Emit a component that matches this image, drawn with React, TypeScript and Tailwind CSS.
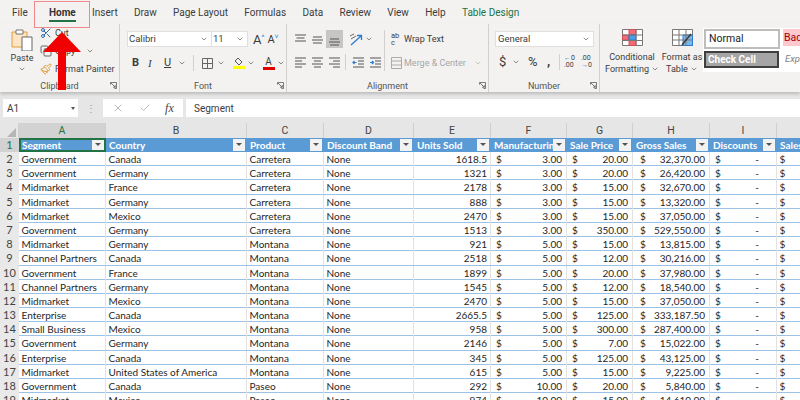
import { ChevronDown, Scissors, Copy, Paintbrush, X, Check } from "lucide-react";

const tabs = ["File", "Home", "Insert", "Draw", "Page Layout", "Formulas", "Data", "Review", "View", "Help"];

const rows = [
  ["Government", "Canada", "Carretera", "1618.5", "3.00", "20.00", "32,370.00"],
  ["Government", "Germany", "Carretera", "1321", "3.00", "20.00", "26,420.00"],
  ["Midmarket", "France", "Carretera", "2178", "3.00", "15.00", "32,670.00"],
  ["Midmarket", "Germany", "Carretera", "888", "3.00", "15.00", "13,320.00"],
  ["Midmarket", "Mexico", "Carretera", "2470", "3.00", "15.00", "37,050.00"],
  ["Government", "Germany", "Carretera", "1513", "3.00", "350.00", "529,550.00"],
  ["Midmarket", "Germany", "Montana", "921", "5.00", "15.00", "13,815.00"],
  ["Channel Partners", "Canada", "Montana", "2518", "5.00", "12.00", "30,216.00"],
  ["Government", "France", "Montana", "1899", "5.00", "20.00", "37,980.00"],
  ["Channel Partners", "Germany", "Montana", "1545", "5.00", "12.00", "18,540.00"],
  ["Midmarket", "Mexico", "Montana", "2470", "5.00", "15.00", "37,050.00"],
  ["Enterprise", "Canada", "Montana", "2665.5", "5.00", "125.00", "333,187.50"],
  ["Small Business", "Mexico", "Montana", "958", "5.00", "300.00", "287,400.00"],
  ["Government", "Germany", "Montana", "2146", "5.00", "7.00", "15,022.00"],
  ["Enterprise", "Canada", "Montana", "345", "5.00", "125.00", "43,125.00"],
  ["Midmarket", "United States of America", "Montana", "615", "5.00", "15.00", "9,225.00"],
  ["Government", "Canada", "Paseo", "292", "10.00", "20.00", "5,840.00"],
  ["Midmarket", "Mexico", "Paseo", "974", "10.00", "15.00", "14,610.00"],
];

const grid = "grid grid-cols-[19px_87px_141px_77px_90px_77px_76px_66px_77px_67px_60px]";

const Caret = ({ className = "" }: { className?: string }) => (
  <ChevronDown size={8} strokeWidth={2} className={`shrink-0 text-[#555] ${className}`} />
);

const Launcher = () => (
  <svg width="7" height="7" viewBox="0 0 8 8" className="absolute right-[2px] bottom-[3px] text-[#666]" fill="none" stroke="currentColor">
    <path d="M0.5 3V0.5H7.5V7.5H5" />
    <path d="M1 1l5 5M6 3.5V6H3.5" />
  </svg>
);

const Group = ({ label, w, children }: { label: string; w: string; children: React.ReactNode }) => (
  <div className={`relative flex h-[68px] shrink-0 flex-col border-r border-[#d2d0ce] ${w}`}>
    <div className="min-h-0 flex-1">{children}</div>
    <div className="text-center text-[9px] leading-[12px] text-[#555]">{label}</div>
    <Launcher />
  </div>
);

// four short lines, used for the alignment buttons
const Lines = ({ d, accent }: { d: string; accent?: string }) => (
  <svg width="13" height="13" viewBox="0 0 13 13" fill="none" stroke="#555" strokeWidth="1">
    <path d={d} />
    {accent && <path d={accent} stroke="#2b7cd3" strokeWidth="1.2" />}
  </svg>
);

const Filter = () => (
  <span className="absolute right-[2px] top-[1px] flex h-[12px] w-[12px] items-center justify-center bg-[#f2f2f2]">
    <span className="h-0 w-0 border-x-[3px] border-t-[3px] border-x-transparent border-t-[#555]" />
  </span>
);

const HeaderCell = ({ label, selected }: { label: string; selected?: boolean }) => (
  <div className="relative whitespace-nowrap pl-[3px] pr-[14px] font-bold text-white">
    <span className="block overflow-hidden">{label}</span>
    <Filter />
    {selected && <span className="absolute inset-0 border-2 border-[#217346]" />}
  </div>
);

const Money = ({ value, left = "pl-[5px]", right = "pr-[4px]" }: { value: string; left?: string; right?: string }) => (
  <div className={`flex justify-between border-r border-[#e2e2e2] ${left} ${right}`}>
    <span>$</span>
    <span>{value}</span>
  </div>
);

const Cell = ({ children, right }: { children: React.ReactNode; right?: boolean }) => (
  <div className={`overflow-hidden whitespace-nowrap border-r border-[#e2e2e2] ${right ? "pr-[3px] text-right" : "pl-[2.5px]"}`}>{children}</div>
);

export default function App() {
  return (
    <div className="relative h-[400px] w-[800px] overflow-hidden bg-[#e6e6e6] font-['Roboto',sans-serif] text-[#3c3c3c]">
      {/* tabs */}
      <nav className="flex h-[24px] items-center gap-[16.3px] bg-[#f3f2f1] pl-[12px] text-[10px]">
        {tabs.map((t) => (
          <span key={t} className={`relative ${t === "Home" ? "ml-[5px] font-bold text-[#333]" : ""}`}>
            {t}
            {t === "Home" && <span className="absolute -bottom-[2px] left-0 right-0 h-[2px] bg-[#217346]" />}
          </span>
        ))}
        <span className="text-[#217346]">Table Design</span>
      </nav>

      {/* ribbon */}
      <div className="flex h-[68px] whitespace-nowrap bg-[#f3f2f1] shadow-[0_2px_3px_rgba(0,0,0,0.18)]">
        <Group label="Clipboard" w="w-[120px]">
          <div className="flex pl-[10px] pt-[3px]">
            <div className="flex w-[24px] flex-col items-center">
              <svg width="24" height="24" viewBox="0 0 24 24" fill="none">
                <path d="M2 5h15v15H2z" fill="#fbe5c4" stroke="#e39c36" />
                <path d="M6 3h7v4H6z" fill="#fff" stroke="#777" />
                <path d="M12 10h10v14H12z" fill="#fff" stroke="#666" />
              </svg>
              <span className="text-[9px] leading-[14px]">Paste</span>
              <Caret />
            </div>
            <div className="ml-[6px] -mt-[1px] flex flex-col gap-[4px] text-[9px] leading-[14px]">
              <div className="flex items-center gap-[3px]">
                <Scissors size={12} className="text-[#2b6cb0]" />
                <span>Cut</span>
              </div>
              <div className="flex items-center gap-[3px]">
                <Copy size={12} className="text-[#666]" />
                <span>Copy</span>
                <Caret className="ml-[8px]" />
              </div>
              <div className="flex items-center gap-[3px]">
                <Paintbrush size={12} className="text-[#e39c36]" />
                <span>Format Painter</span>
              </div>
            </div>
          </div>
        </Group>

        <Group label="Font" w="w-[167px]">
          <div className="flex items-center pl-[7px] pt-[7px]">
            <div className="flex h-[16px] w-[85px] items-center justify-between border border-[#e1dfdd] bg-white px-[1px] pr-[3px] text-[9.5px]">
              Calibri
              <Caret />
            </div>
            <div className="flex h-[16px] w-[36px] items-center justify-between border border-l-0 border-[#e1dfdd] bg-white px-[1px] pr-[3px] text-[9.5px]">
              11
              <Caret />
            </div>
            <span className="ml-[5px] text-[13px] leading-none">A<sup className="text-[7px] text-[#2b7cd3]">^</sup></span>
            <span className="ml-[3px] text-[11px] leading-none">A<sup className="text-[7px] text-[#2b7cd3]">˅</sup></span>
          </div>
          <div className="flex items-center pl-[12px] pt-[8px] text-[11px] leading-[14px]">
            <b className="w-[16px]">B</b>
            <i className="w-[16px] font-['Liberation_Serif',serif]">I</i>
            <u className="w-[14px]">U</u>
            <Caret />
            <span className="mx-[7px] h-[16px] w-px bg-[#d2d0ce]" />
            <svg width="13" height="13" viewBox="0 0 13 13" fill="none" stroke="#666"><path d="M1.5 1.5h10v10h-10zM6.5 1.5v10M1.5 6.5h10" /></svg>
            <Caret className="ml-[3px]" />
            <span className="ml-[7px] flex w-[13px] flex-col items-center">
              <svg width="11" height="9" viewBox="0 0 11 9" fill="none" stroke="#555"><path d="M2 4l3-3 4 4-3 3z" /></svg>
              <span className="h-[3px] w-[12px] bg-[#ffff00]" />
            </span>
            <Caret className="ml-[2px]" />
            <span className="ml-[7px] flex w-[13px] flex-col items-center text-[10px] leading-[10px]">
              A
              <span className="h-[3px] w-[12px] bg-[#e00000]" />
            </span>
            <Caret className="ml-[2px]" />
          </div>
        </Group>

        <Group label="Alignment" w="w-[202px]">
          <div className="flex pl-[5px] pt-[6px]">
            <div className="flex w-[92px] flex-col">
              <div className="flex items-center">
                <span className="flex h-[18px] w-[17px] items-center justify-center"><Lines d="M1 2h11M2.5 5h8M1 8h11" /></span>
                <span className="flex h-[18px] w-[17px] items-center justify-center"><Lines d="M2 4h9M1 7h11M2 10h9" /></span>
                <span className="flex h-[18px] w-[17px] items-center justify-center bg-[#c8c6c4]"><Lines d="M2 6h9M1 9h11M2 12h9" /></span>
                <span className="ml-[6px] flex items-center">
                  <svg width="14" height="13" viewBox="0 0 14 13" fill="none" stroke="#2b7cd3" strokeWidth="1.3"><path d="M2 12L12 3M8 2.5h4.5V7" /><path d="M1 3l4-2M2 6l5-3" stroke="#666" strokeWidth="1" /></svg>
                  <Caret className="ml-[2px]" />
                </span>
              </div>
              <div className="mt-[6px] flex items-center">
                <span className="flex w-[17px] justify-center"><Lines d="M1 2h11M1 5h7M1 8h11M1 11h7" /></span>
                <span className="flex w-[17px] justify-center"><Lines d="M1 2h11M3 5h7M1 8h11M3 11h7" /></span>
                <span className="flex w-[17px] justify-center"><Lines d="M1 2h11M5 5h7M1 8h11M5 11h7" /></span>
                <span className="mx-[2px] h-[16px] w-px bg-[#d2d0ce]" />
                <span className="ml-[2px] flex w-[17px] justify-center"><Lines d="M1 2h11M6 5h6M6 8h6M1 11h11" accent="M4.5 6.5H1M2.5 5L1 6.5 2.5 8" /></span>
                <span className="flex w-[17px] justify-center"><Lines d="M1 2h11M6 5h6M6 8h6M1 11h11" accent="M1 6.5h3.5M3 5l1.5 1.5L3 8" /></span>
              </div>
            </div>
            <span className="h-[41px] w-px bg-[#d2d0ce]" />
            <div className="ml-[6px] flex flex-col text-[9px] leading-[14px]">
              <div className="mt-[2px] flex items-center gap-[2px]">
                <span className="w-[10px] text-[7.5px] leading-[7px]">ab<br />c</span>
                <span className="ml-[1px]">Wrap Text</span>
              </div>
              <div className="mt-[10px] flex items-center gap-[2px] text-[#a6a6a6]">
                <svg width="11" height="12" viewBox="0 0 11 12" fill="none" stroke="#aaa"><path d="M.5.5h10v11H.5zM.5 4h10M.5 8h10" /></svg>
                <span>Merge &amp; Center</span>
                <Caret className="ml-[6px] text-[#aaa]" />
              </div>
            </div>
          </div>
        </Group>

        <Group label="Number" w="w-[111px]">
          <div className="pl-[6px] pt-[7px]">
            <div className="flex h-[16px] w-[99px] items-center justify-between border border-[#e1dfdd] bg-white pl-[2px] pr-[3px] text-[9.5px]">
              General
              <Caret />
            </div>
            <div className="flex items-center pl-[4px] pt-[7px] text-[13px] leading-[16px]">
              <span className="w-[13px]">$</span>
              <Caret />
              <span className="ml-[8px] w-[17px]">%</span>
              <span className="ml-[2px] w-[12px] font-bold">,</span>
              <span className="mr-[4px] h-[16px] w-px bg-[#d2d0ce]" />
              <span className="w-[17px] text-[7px] leading-[7px]"><span className="text-[#2b7cd3]">←</span>0<br />.00</span>
              <span className="w-[17px] text-[7px] leading-[7px]">.00<br /><span className="text-[#2b7cd3]">→</span>0</span>
            </div>
          </div>
        </Group>

        <div className="flex flex-1 pl-[2px] text-[9px] leading-[12px]">
          <div className="flex w-[60px] flex-col items-center pt-[5px] text-center">
            <svg width="21" height="17" viewBox="0 0 21 17" fill="#fff" stroke="#777">
              <path d="M.5.5h20v16H.5z" />
              <path d="M7 .5h7v5H7zM7 11.5h7v5H7zM.5 6h6v5H.5z" fill="#f46b73" stroke="#d0505a" />
              <path d="M7 6h7v5H7z" fill="#4a9de0" stroke="#2b7cd3" />
              <path d="M14 .5v16M.5 6h20M.5 11.5h20" fill="none" />
            </svg>
            <span className="mt-[5px]">Conditional</span>
            <span className="flex items-center gap-[2px]">Formatting <Caret /></span>
          </div>
          <div className="flex w-[40px] flex-col items-center pt-[5px] text-center">
            <svg width="21" height="17" viewBox="0 0 21 17" fill="#fff" stroke="#777">
              <path d="M.5.5h20v16H.5z" />
              <path d="M11 6h9.500v10.500H11z" fill="#7cb8ea" stroke="#2b7cd3" />
              <path d="M.5 6h20M.5 11h20M7 .5v16M14 .5v16" fill="none" />
              <path d="M10 16l9-11" stroke="#3c3c3c" strokeWidth="1.5" fill="none" />
            </svg>
            <span className="mt-[5px]">Format as</span>
            <span className="flex items-center gap-[2px]">Table <Caret /></span>
          </div>
          <div className="ml-[1px] mt-[4px] flex h-[44px] w-[97px] flex-col gap-[2px] overflow-hidden bg-white pl-[1px] pt-[1px]">
            <div className="flex gap-[3px]">
              <span className="flex h-[20px] w-[76px] shrink-0 items-center border-2 border-[#bdbdbd] pl-[3px] text-[10.5px] text-[#222]">Normal</span>
              <span className="flex h-[17px] w-[30px] shrink-0 items-center bg-[#ffc7ce] pl-[1px] text-[10.5px] text-[#9c0006]">Bad</span>
            </div>
            <div className="flex gap-[3px]">
              <span className="flex h-[17px] w-[75px] shrink-0 items-center border-2 border-[#3f3f3f] bg-[#a5a5a5] pl-[2px] text-[10px] font-bold text-white">Check Cell</span>
              <span className="pl-[3px] pt-[2px] text-[9.5px] italic text-[#7f7f7f]">Explanatory</span>
            </div>
          </div>
        </div>
      </div>

      {/* formula bar */}
      <div className="mt-[7px] flex h-[18px] gap-[3px] pl-[3px] text-[10px]">
        <div className="flex w-[75px] items-center justify-between bg-white pl-[4px] pr-[3px]">
          A1
          <span className="h-0 w-0 border-x-[2.5px] border-t-[3px] border-x-transparent border-t-[#555]" />
        </div>
        <div className="flex w-[19px] items-center justify-center text-[#999] tracking-tighter">⋮</div>
        <div className="flex w-[80px] items-center justify-around bg-white px-[2px] text-[#bbb]">
          <X size={12} />
          <Check size={12} />
          <i className="font-['Liberation_Serif',serif] text-[12px] text-[#444]">fx</i>
        </div>
        <div className="flex flex-1 items-center bg-white pl-[8px]">Segment</div>
      </div>

      {/* sheet */}
      <div className="mt-[6px] font-['Lato',sans-serif] text-[10px] leading-[14px]">
        <div className={`${grid} h-[14.5px] text-center font-['Roboto',sans-serif] text-[10.5px] leading-[15px] text-[#444]`}>
          <div className="relative border-r border-[#cfcfcf]">
            <span className="absolute bottom-[1px] right-[2px] h-0 w-0 border-b-[9px] border-l-[9px] border-b-[#b5b5b5] border-l-transparent" />
          </div>
          {["A", "B", "C", "D", "E", "F", "G", "H", "I", ""].map((c, i) => (
            <div key={i} className={`border-r border-[#cfcfcf] ${c === "A" ? "bg-[#d2d2d2] text-[#217346]" : ""}`}>{c}</div>
          ))}
        </div>
        <div className={`${grid} relative h-[14.5px] bg-[#5b9bd5]`}>
          <div className="bg-[#d2d2d2] text-center text-[11px] text-[#217346]">1</div>
          <HeaderCell label="Segment" selected />
          <HeaderCell label="Country" />
          <HeaderCell label="Product" />
          <HeaderCell label="Discount Band" />
          <HeaderCell label="Units Sold" />
          <HeaderCell label="Manufacturing Price" />
          <HeaderCell label="Sale Price" />
          <HeaderCell label="Gross Sales" />
          <HeaderCell label="Discounts" />
          <HeaderCell label="Sales" />
        </div>
        {rows.map((r, i) => (
          <div key={i} className={`${grid} h-[14.2px] border-b border-[#9cc2e5] bg-white text-[#262626]`}>
            <div className="-mb-px bg-[#e9e9e9] text-center text-[11px] text-[#444]">{i + 2}</div>
            <Cell>{r[0]}</Cell>
            <Cell>{r[1]}</Cell>
            <Cell>{r[2]}</Cell>
            <Cell>None</Cell>
            <Cell right>{r[3]}</Cell>
            <Money value={r[4]} />
            <Money value={r[5]} />
            <Money value={r[6]} left="pl-[7px]" />
            <Money value="-" right="pr-[17px]" />
            <Cell>$</Cell>
          </div>
        ))}
      </div>

      {/* annotation on top of the screenshot */}
      <div className="absolute left-[34px] top-[1px] h-[27px] w-[56px] border border-[#f08a8a]" />
      <svg width="40" height="60" viewBox="0 0 40 60" className="absolute left-[42px] top-[31px]">
        <path d="M20 1L39 21H24V59H16V21H1Z" fill="#f00000" />
      </svg>
    </div>
  );
}
